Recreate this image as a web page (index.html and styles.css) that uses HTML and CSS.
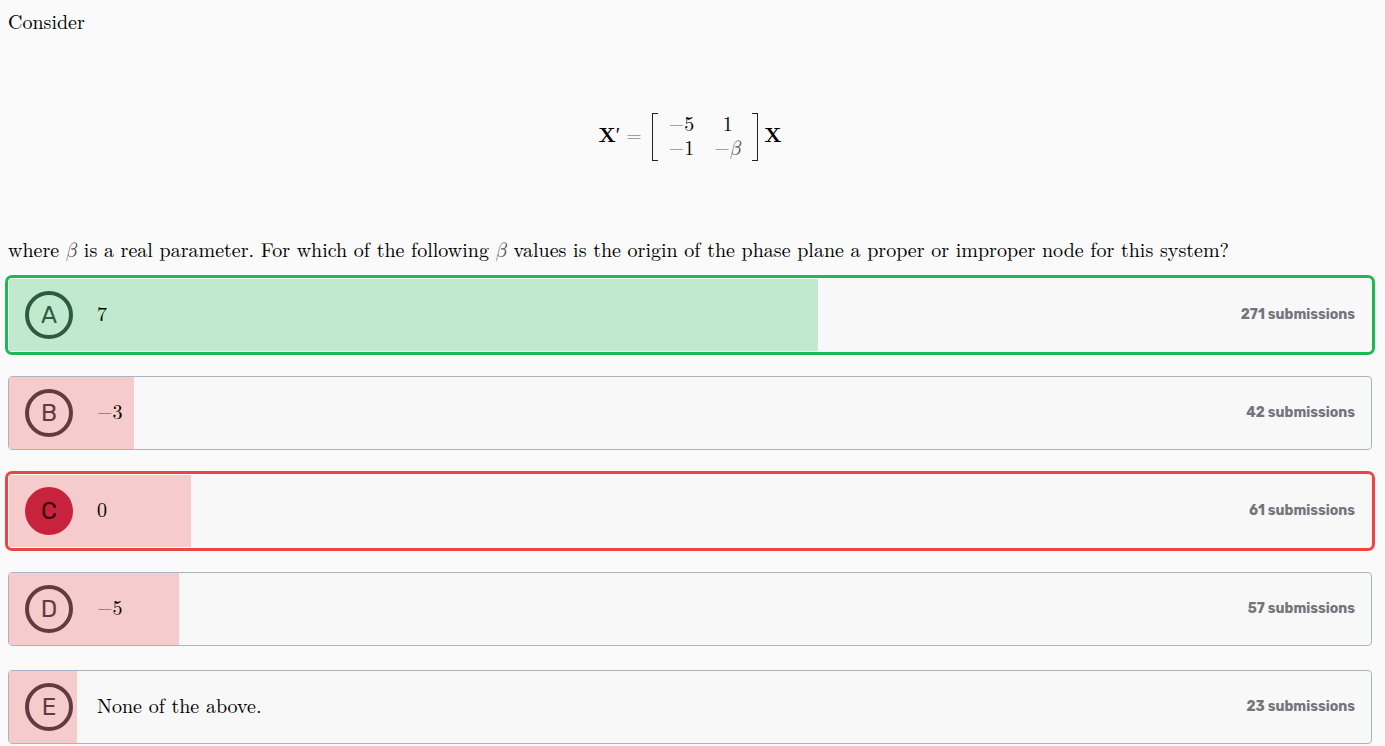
FILE: index.html
```html
<!DOCTYPE html>
<html lang="en">
  <head>
    <meta charset="UTF-8" />
    <meta name="viewport" content="width=device-width, initial-scale=1.0" />
    <title>Phase Plane Question</title>
    <link rel="stylesheet" href="styles.css">
  </head>
  <body>
    <main>
      <p class="prompt">Consider</p>
      <div class="equation">
        <span class="vector"><b>X</b>′</span>
        <span class="vector light">=</span>
        <div class="matrix">
          <span><span class="light">−</span>5</span>
          <span>1</span>
          <span><span class="light">−</span>1</span>
          <span><span class="light">−</span><math><mi>β</mi></math></span>
        </div>
        <b class="vector">X</b>
      </div>
      <p class="prompt">where <math><mi>β</mi></math> is a real parameter. For which of the following <math><mi>β</mi></math> values is the origin of the phase plane a proper or improper node for this system?</p>

      <div class="options">
        <button type="button" class="option correct">
          <span class="fill" style="width: 59.4%"></span>
          <span class="letter">A</span>
          <span class="answer">7</span>
          <span class="count">271 submissions</span>
        </button>
        <button type="button" class="option">
          <span class="fill" style="width: 9.2%"></span>
          <span class="letter">B</span>
          <span class="answer"><span class="light">−</span>3</span>
          <span class="count">42 submissions</span>
        </button>
        <button type="button" class="option selected">
          <span class="fill" style="width: 13.38%"></span>
          <span class="letter">C</span>
          <span class="answer">0</span>
          <span class="count">61 submissions</span>
        </button>
        <button type="button" class="option">
          <span class="fill" style="width: 12.5%"></span>
          <span class="letter">D</span>
          <span class="answer"><span class="light">−</span>5</span>
          <span class="count">57 submissions</span>
        </button>
        <button type="button" class="option">
          <span class="fill" style="width: 5%"></span>
          <span class="letter">E</span>
          <span class="answer">None of the above.</span>
          <span class="count">23 submissions</span>
        </button>
      </div>
    </main>
  </body>
</html>
```
FILE: styles.css
```css
* {
  margin: 0;
  padding: 0;
  box-sizing: border-box;
}
body {
  background-color: #fafafa;
  color: #000;
  font-family: "Latin Modern Roman", "CMU Serif", "Liberation Serif", serif;
  font-size: 20px;
  line-height: 24px;
}
main {
  padding: 9px 13px 2px 8px;
}
.equation {
  display: flex;
  justify-content: center;
  align-items: center;
  gap: 6px;
  padding: 80px 0 76px;
}
.vector {
  padding-bottom: 6px;
}
.light {
  opacity: 0.45;
}
math {
  color: #444;
  font-family: "Latin Modern Math", "Liberation Serif", serif;
  font-size: 20px;
}
/* Two columns between square brackets */
.matrix {
  display: grid;
  grid-template-columns: auto auto;
  justify-items: center;
  column-gap: 20px;
  row-gap: 4px;
  line-height: 20px;
  margin-left: 4px;
  padding: 0 17px 2px;
  background:
    linear-gradient(#222, #222) left / 1px 100%,
    linear-gradient(#222, #222) right / 1px 100%,
    linear-gradient(#222, #222) left top / 6px 1px,
    linear-gradient(#222, #222) left bottom / 6px 1px,
    linear-gradient(#222, #222) right top / 6px 1px,
    linear-gradient(#222, #222) right bottom / 6px 1px;
  background-repeat: no-repeat;
}
.options {
  display: flex;
  flex-direction: column;
  gap: 24px;
  margin-top: 17px;
}
.option {
  position: relative;
  display: flex;
  align-items: center;
  gap: 24px;
  width: 100%;
  padding: 12px 16px;
  border: 1px solid #a9b4bf;
  border-radius: 4px;
  background-color: #f8f8f8;
  color: #000;
  font: inherit;
  text-align: left;
  cursor: pointer;
}
.fill {
  position: absolute;
  left: 0;
  top: 0;
  height: 100%;
  background-color: #f5cbcb;
}
.letter,
.answer,
.count {
  position: relative;
}
.letter {
  display: flex;
  justify-content: center;
  align-items: center;
  width: 48px;
  height: 48px;
  border: 4px solid #623b41;
  border-radius: 50%;
  color: #623b41;
  font-family: Rubik, Inter, sans-serif;
  font-size: 24px;
}
.answer {
  flex: 1;
  padding-bottom: 4px;
}
.count {
  color: #74747b;
  font-family: Rubik, Inter, sans-serif;
  font-size: 14px;
  font-weight: 700;
}
.correct {
  border-color: #f8f8f8;
  outline: 3px solid #1db954;
}
.correct .fill {
  background-color: #c1e9ce;
}
.correct .letter {
  border-color: #2d5a42;
  color: #2d5a42;
}
.selected {
  border-color: #f8f8f8;
  outline: 3px solid #ef4444;
}
.selected .letter {
  border-color: #c8233d;
  background-color: #c8233d;
  color: #35090f;
}
```
